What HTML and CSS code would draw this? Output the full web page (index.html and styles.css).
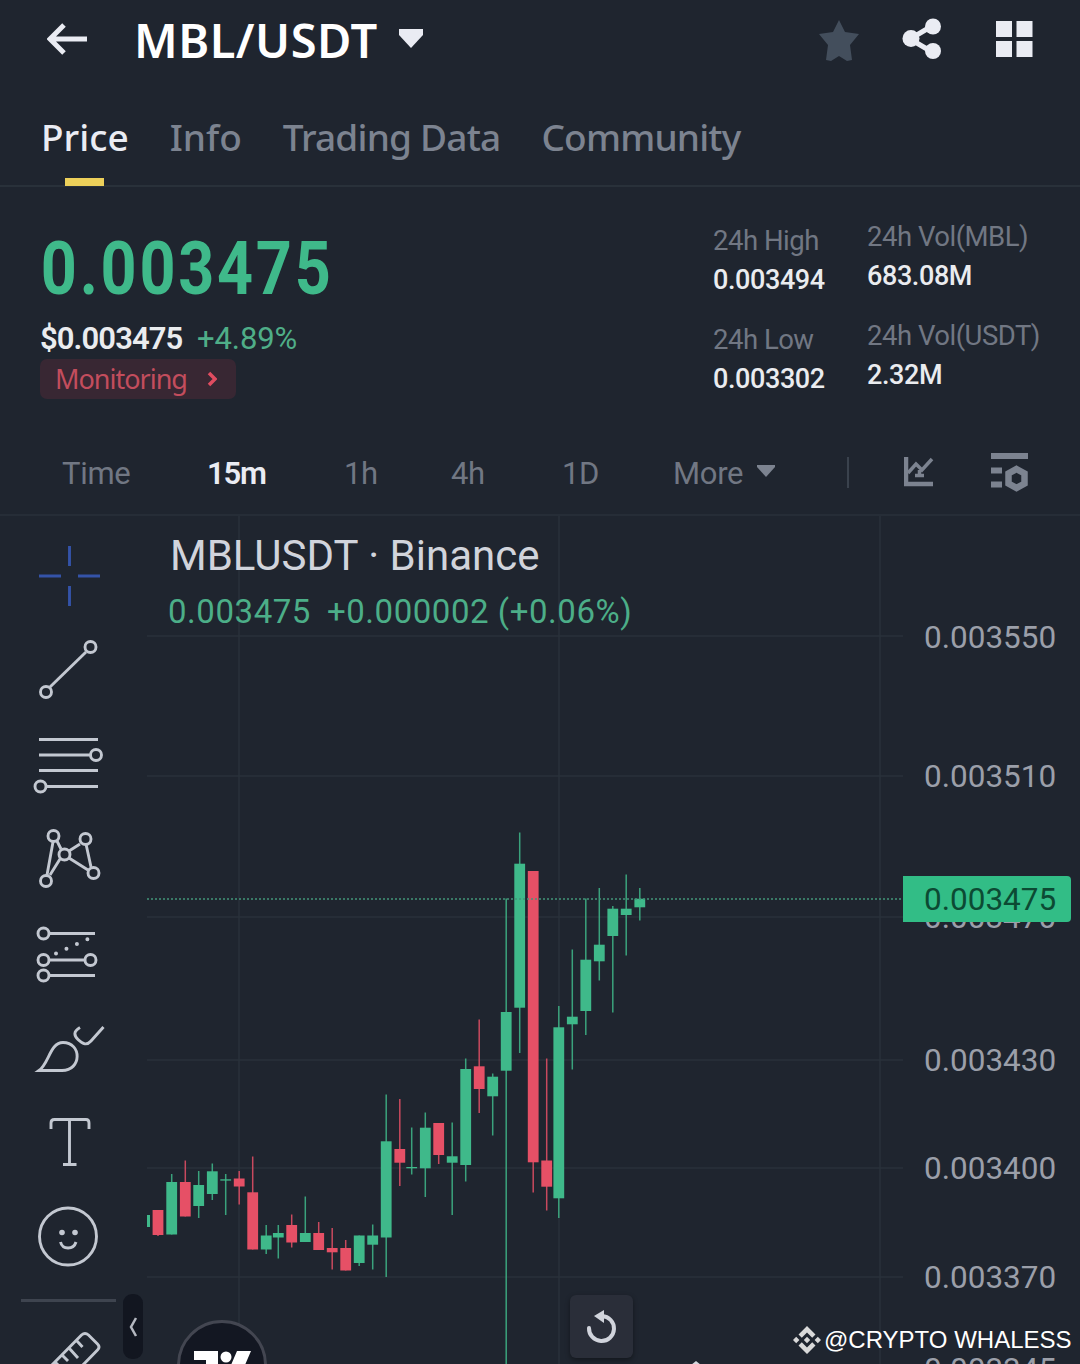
FILE: index.html
```html
<!DOCTYPE html>
<html lang="en">
<head>
    <meta charset="UTF-8">
    <meta name="viewport" content="width=device-width, initial-scale=1.0">
    <title>MBL/USDT</title>
    <link rel="stylesheet" href="styles.css">
</head>
<body>
    <div class="app">
        <header class="header">
            <svg class="back" width="40" height="34" viewBox="0 0 40 34"><path d="M17 3 3 17l14 14M4 17h36" /></svg>
            <h1 class="pair">MBL/USDT</h1>
            <svg class="caret" width="26" height="22" viewBox="0 0 26 22"><path d="M1 1h24v6L13 20 1 7z" /></svg>
            <svg class="star" width="40" height="42" viewBox="0 0 40 42"><path d="m20 1 6 12 14 2-9 11 2 15-5 1-8-5-8 5-5-1 2-15L0 15l14-2z" /></svg>
            <svg class="share" width="40" height="42" viewBox="0 0 40 42">
                <path d="M30 8 8 21l22 13" />
                <circle cx="31" cy="8.500" r="8" /><circle cx="9" cy="20.500" r="8.500" /><circle cx="31" cy="33" r="8" />
            </svg>
            <svg class="apps" width="37" height="36" viewBox="0 0 37 36"><path d="M0 0h16v16H0zM20.500 0h16v16h-16zM0 20h16v16H0zM20.500 20h16v16h-16z" /></svg>
        </header>

        <nav class="tabs">
            <a class="tab active">Price</a>
            <a class="tab">Info</a>
            <a class="tab tight">Trading Data</a>
            <a class="tab tight">Community</a>
        </nav>

        <section class="summary">
            <div class="quote">
                <div class="last">0.003475</div>
                <div class="sub"><span class="usd">$0.003475</span><span class="change">+4.89%</span></div>
                <div class="badge">
                    <span>Monitoring</span>
                    <svg width="10" height="16" viewBox="0 0 10 16"><path d="m2 2 6 6-6 6" /></svg>
                </div>
            </div>
            <dl class="stats low">
                <dt>24h High</dt><dd>0.003494</dd>
                <dt>24h Low</dt><dd>0.003302</dd>
            </dl>
            <dl class="stats">
                <dt>24h Vol(MBL)</dt><dd>683.08M</dd>
                <dt>24h Vol(USDT)</dt><dd>2.32M</dd>
            </dl>
        </section>

        <nav class="frames">
            <a>Time</a>
            <a class="active">15m</a>
            <a>1h</a>
            <a>4h</a>
            <a>1D</a>
            <a>More</a>
            <svg class="more" width="18" height="12" viewBox="0 0 18 12"><path d="M0 0h18v2L9 12 0 2z" /></svg>
            <i class="sep"></i>
            <svg class="ind" width="30" height="30" viewBox="0 0 30 30">
                <path d="M2 0v27h27" stroke-width="4.500" />
                <path d="m4 16 8-9 6 6L28 2M11 18.500h9M15.500 13v5" stroke-width="3.500" />
            </svg>
            <svg class="settings" width="38" height="40" viewBox="0 0 38 40">
                <path d="M0 4h37M0 18.500h11M0 32.500h11" stroke-width="6" />
                <path d="m25.500 17 8 4.500v10l-8 4.500-8-4.500v-10z" stroke-width="6.500" />
            </svg>
        </nav>

        <main class="chart">
            <div class="tools">
                <svg class="cross" viewBox="0 529 147 94"><path d="M69.500 546v20M69.500 586v20M39 576h22M78 576h22" /></svg>
                <svg viewBox="0 623 147 94"><path d="m50 687 36-35" /><circle cx="46" cy="692" r="5.500" /><circle cx="90.500" cy="647" r="5.500" /></svg>
                <svg viewBox="0 717 147 94"><path d="M39 739.500h59M39 755h51M39 770.500h59M47 786.500h51" /><circle cx="96" cy="755" r="5.500" /><circle cx="40.500" cy="786.500" r="5.500" /></svg>
                <svg viewBox="0 811 147 94">
                    <path d="m53 842-6 33M57 841l4 8M69 851l11-7M86 844l5 23M69 858l19 12M60 859l-10 16" />
                    <circle cx="53.500" cy="836" r="5.500" /><circle cx="85.500" cy="839" r="5.500" /><circle cx="64.500" cy="854.500" r="5.500" /><circle cx="46" cy="881" r="5.500" /><circle cx="93.500" cy="873" r="5.500" />
                </svg>
                <svg viewBox="0 905 147 94">
                    <path d="M49 933.500h46M49 960h36M49 975.500h46" />
                    <path class="dots" d="m56 953.500 34-15.500" />
                    <circle cx="43.500" cy="933.500" r="5.500" /><circle cx="43.500" cy="960" r="5.500" /><circle cx="90.500" cy="960" r="5.500" /><circle cx="43.500" cy="975.500" r="5.500" />
                </svg>
                <svg viewBox="0 999 147 94"><path d="M39 1070.500c10-7 11-28 24-28 19 0 19 28-1 28zM80 1027.500c-7 4-6 8-2 12 5 5 9 6 13 1.500l12.500-14" /></svg>
                <svg viewBox="0 1093 147 94"><path d="M51 1129v-6q0-3.500 3.500-3.500H86q3 0 3 3.500v6M69.500 1120v44.500M63 1164.500h13.500" /></svg>
                <svg viewBox="0 1187 147 94">
                    <circle cx="68" cy="1236.500" r="28.500" /><path d="M60.500 1242c2 8 13 8 15.500 0" />
                    <circle class="dot" cx="62" cy="1232.500" r="2.800" /><circle class="dot" cx="75" cy="1232.500" r="2.800" />
                </svg>
                <svg viewBox="0 1281 147 83">
                    <path class="rule" d="M21 1300.500h95" />
                    <path d="m48 1369 33.500-34q3.500-3 7 0l9 9q3 3 0 6L79 1369M77 1341l5.500 6M69 1348l9 10M62 1355l6 6M55 1362l8 8" />
                </svg>
            </div>

            <svg class="plot" viewBox="147 516 933 848">
                <path class="grid" d="M147 636h756M147 776h756M147 917h756M147 1060h756M147 1168h756M147 1277h756M239 516v848M559 516v848M880 516v848" />
                <g id="candles"></g>
                <path class="price-line" d="M147 899h756" />
                <g class="axis">
                    <text x="924" y="647.500">0.003550</text>
                    <text x="924" y="787">0.003510</text>
                    <text x="924" y="928">0.003470</text>
                    <text x="924" y="1070.500">0.003430</text>
                    <text x="924" y="1178.500">0.003400</text>
                    <text x="924" y="1288">0.003370</text>
                    <text x="924" y="1380">0.003345</text>
                </g>
                <path class="price-tag" d="M903 876h164q4 0 4 4v38q0 4-4 4H903z" />
                <text class="price-text" x="924" y="910">0.003475</text>
                <path class="peak" d="m691 1365 5-4 5 4z" />
            </svg>

            <div class="legend">
                <div class="symbol">MBLUSDT · Binance</div>
                <div class="delta"><span>0.003475</span><span>+0.000002 (+0.06%)</span></div>
            </div>

            <div class="collapse"><svg width="9" height="20" viewBox="0 0 9 20"><path d="M7 1 2 10l5 9" /></svg></div>

            <svg class="tv" width="90" height="45" viewBox="0 0 90 45">
                <circle cx="45" cy="45" r="43.500" />
                <path d="M17 31h24v14H29v-5H17zM60 31h14l-6 14H54z" /><circle class="tv-dot" cx="49" cy="37" r="5.500" />
            </svg>

            <div class="reset">
                <svg width="32" height="34" viewBox="0 0 32 34"><path d="M3 18a12.500 12.500 0 1 0 13-12" /><path class="head" d="M8 6 18 0v13z" /></svg>
            </div>

            <div class="watermark">
                <svg width="28" height="28" viewBox="0 0 28 28">
                    <path d="m14 0 8.500 8.500-3.300 3.200L14 6.500l-5.200 5.200-3.300-3.200zM14 28l8.500-8.500-3.300-3.200-5.200 5.200-5.200-5.200-3.300 3.200zM3.200 10.800 6.400 14l-3.200 3.200L0 14zM24.800 10.800 28 14l-3.200 3.200-3.200-3.200zM14 10.800l3.200 3.200-3.200 3.200-3.200-3.200z" />
                </svg>
                <span>@CRYPTO WHALESS</span>
            </div>
        </main>
    </div>
    <script>
        // x, wick top, body top, body bottom, wick bottom, up
        const candles = [
            [158, 1210, 1210, 1235, 1236, 0],
            [171.7, 1174, 1182, 1234.5, 1234.5, 1],
            [185.3, 1160.5, 1182, 1216.5, 1216.5, 0],
            [198.7, 1171, 1185, 1206, 1218, 1],
            [212.3, 1163.5, 1171.3, 1194, 1200, 1],
            [225.7, 1174, 1179.3, 1180.6, 1215, 1],
            [239.2, 1171, 1178.5, 1186.5, 1204.5, 0],
            [252.7, 1156.5, 1192.3, 1249.5, 1249.5, 0],
            [266.2, 1225, 1235.5, 1249.5, 1254, 1],
            [278.3, 1225, 1233, 1237.5, 1258.5, 1],
            [291.7, 1214.5, 1225, 1242.5, 1247.5, 0],
            [305.3, 1196.5, 1233, 1242, 1242, 1],
            [318.7, 1222, 1233, 1250, 1250, 0],
            [332.2, 1228, 1248, 1252.3, 1269.5, 0],
            [345.7, 1240, 1248, 1270.5, 1270.5, 0],
            [359.2, 1235.5, 1235.5, 1263, 1266, 1],
            [372.7, 1224.5, 1235.5, 1244.7, 1269.5, 1],
            [386.2, 1094.5, 1141.3, 1237.5, 1277, 1],
            [399.8, 1099, 1149, 1162.7, 1186, 0],
            [411.7, 1127.5, 1167, 1168.3, 1174.5, 1],
            [425.3, 1112.5, 1127.7, 1168.3, 1197, 1],
            [438.7, 1123, 1123, 1155, 1164, 0],
            [452.2, 1122.5, 1156.3, 1162.7, 1215, 1],
            [465.7, 1058.5, 1069, 1165, 1181.5, 1],
            [479.2, 1019.5, 1066.3, 1089, 1113, 0],
            [492.7, 1073.5, 1076.7, 1096.3, 1135.5, 1],
            [506.2, 898.5, 1012, 1070.7, 1364, 1],
            [519.7, 832.5, 863.7, 1007.7, 1053, 1],
            [533.2, 871, 871, 1162.3, 1192.5, 0],
            [546.7, 1058.5, 1160.5, 1186.7, 1210.5, 0],
            [558.8, 1006, 1027.3, 1198.3, 1218, 1],
            [572.3, 949.5, 1016.7, 1024.3, 1069.5, 1],
            [585.8, 898.5, 959.7, 1011, 1035, 1],
            [599.3, 888, 944.7, 961.3, 980.5, 1],
            [612.8, 906, 908.7, 936, 1012.5, 1],
            [626.2, 874.5, 908.7, 915, 955.5, 1],
            [639.8, 888, 898.7, 907.3, 920.5, 1]
        ];

        const group = document.getElementById('candles');
        let shapes = '<rect class="up" x="147" y="1215" width="3" height="12"/>';
        candles.forEach(([x, high, top, bottom, low, up]) => {
            const side = up ? 'up' : 'down';
            shapes += `<rect class="wick ${side}" x="${x - 0.75}" y="${high}" width="1.500" height="${low - high}"/>`;
            shapes += `<rect class="${side}" x="${x - 5.4}" y="${top}" width="10.800" height="${bottom - top}"/>`;
        });
        group.innerHTML = shapes;
    </script>
</body>
</html>
```
FILE: styles.css
```css
* {
    box-sizing: border-box;
}

body {
    margin: 0;
    background: #1f252f;
    color: #eaecef;
    font-family: Roboto, sans-serif;
}

svg {
    display: block;
    flex: none;
}

.app {
    width: 1080px;
    height: 1364px;
    overflow: hidden;
}

/* header */
.header {
    display: flex;
    align-items: center;
    height: 78px;
    padding-left: 47px;
}

.header svg {
    fill: #eaecf3;
}

.header .back {
    margin-top: -1px;
    fill: none;
    stroke: #eaecf3;
    stroke-width: 5;
}

.pair {
    width: 242px;
    margin: 2px 0 0 46px;
    padding-left: 1px;
    font: 600 47px/60px "Noto Sans", sans-serif;
    letter-spacing: 0.5px;
    color: #fff;
    white-space: nowrap;
}

.caret {
    margin-left: 23px;
}

.header .star {
    margin: 1px 0 0 395px;
    fill: #434e5c;
}

.header .share {
    margin: -1px 0 0 43px;
    stroke: #eaecf3;
    stroke-width: 5;
}

.share circle {
    stroke: none;
}

.share path {
    fill: none;
}

.header .apps {
    margin: -1px 0 0 54px;
}

/* tabs */
.tabs {
    display: flex;
    gap: 41px;
    height: 109px;
    padding: 32px 0 0 41px;
    border-bottom: 2px solid #29313a;
    font: 500 37px/54px "Noto Sans", sans-serif;
    color: #7c8390;
}

.tab {
    position: relative;
    white-space: nowrap;
}

.tab.tight {
    letter-spacing: -0.8px;
}

.tab.active {
    color: #eaecf3;
}

.tab.active::after {
    content: "";
    position: absolute;
    left: 24px;
    top: 68px;
    width: 39px;
    height: 8px;
    background: #ecd05a;
}

/* price summary */
.summary {
    display: flex;
    height: 243px;
    padding: 37px 0 0 40px;
    white-space: nowrap;
}

.quote {
    width: 673px;
}

.last {
    height: 98px;
    padding: 1px 0 0 1px;
    font-size: 74px;
    font-weight: 700;
    line-height: 88px;
    letter-spacing: 3.2px;
    color: #3fb98a;
    transform: scaleX(0.85);
    transform-origin: left;
}

.sub {
    display: flex;
    height: 37px;
    font-size: 31px;
    line-height: 33px;
}

.usd {
    width: 157px;
    font-weight: 600;
    letter-spacing: -0.9px;
}

.change {
    letter-spacing: -0.1px;
    color: #4fae88;
}

.badge {
    display: flex;
    align-items: center;
    gap: 20px;
    width: 196px;
    height: 40px;
    padding-left: 15px;
    border-radius: 7px;
    background: #382733;
    font: 27px/38px "Noto Sans", sans-serif;
    letter-spacing: -1px;
    color: #c34d5d;
}

.badge svg {
    fill: none;
    stroke: #e04c60;
    stroke-width: 3.5;
}

.stats {
    width: 154px;
    margin: -3px 0 0;
}

.stats.low {
    margin-top: 1px;
}

.stats dt {
    height: 39px;
    font-size: 27.5px;
    line-height: 32px;
    letter-spacing: -0.5px;
    color: #717783;
}

.stats dd {
    height: 60px;
    margin: 0;
    font-size: 27px;
    line-height: 32px;
    font-weight: 500;
    letter-spacing: -0.4px;
}

/* timeframes */
.frames {
    display: grid;
    grid-template-columns: 145px 137px 107px 111px 111px 84px 90px 57px 87px 40px;
    align-items: center;
    height: 86px;
    padding-left: 62px;
    border-bottom: 2px solid #262d37;
    font-size: 31px;
    color: #717783;
}

.frames a {
    padding-top: 2px;
    letter-spacing: -0.3px;
}

.frames .active {
    color: #eaecf3;
    font-weight: 600;
    letter-spacing: -1.2px;
}

.frames svg {
    fill: none;
    stroke: #7c8390;
}

.frames .more {
    margin-top: -2px;
    fill: #7c8390;
    stroke: none;
}

.sep {
    width: 2px;
    height: 31px;
    background: #3a424d;
}

/* chart */
.chart {
    position: relative;
    display: flex;
    height: 848px;
}

.tools {
    width: 147px;
    padding-top: 13px;
}

.tools svg {
    width: 147px;
    fill: none;
    stroke: #c3c8d1;
    stroke-width: 2.9;
}

.tools .cross {
    stroke: #3453a8;
}

.tools .dots {
    stroke-width: 4;
    stroke-linecap: round;
    stroke-dasharray: 0 11.5;
}

.tools .dot {
    fill: #c3c8d1;
    stroke: none;
}

.tools .rule {
    stroke: #3e444f;
}

.plot {
    width: 933px;
    height: 848px;
}

.grid {
    fill: none;
    stroke: #2a313b;
    stroke-width: 1.5;
}

.up {
    fill: #3fb98a;
}

.down {
    fill: #e65066;
}

.wick {
    opacity: 0.85;
}

.price-line {
    stroke: #43957a;
    stroke-width: 1.6;
    stroke-dasharray: 2 2;
}

.axis {
    fill: #9b9fa9;
    font-size: 31.5px;
}

.price-tag {
    fill: #32bd86;
}

.price-text {
    fill: #0c4a33;
    font-size: 31.5px;
}

.peak {
    fill: #d5d8de;
}

.legend {
    position: absolute;
    left: 168px;
    top: 15px;
    white-space: nowrap;
}

.symbol {
    height: 61px;
    padding-left: 2px;
    font-size: 42px;
    line-height: 50px;
    color: #d1d4dc;
}

.delta {
    display: flex;
    gap: 16px;
    font-size: 33px;
    line-height: 40px;
    letter-spacing: 0.55px;
    color: #4cae88;
}

.collapse {
    position: absolute;
    left: 123px;
    top: 778px;
    display: grid;
    place-items: center;
    width: 20px;
    height: 65px;
    border-radius: 9px;
    background: #121620;
}

.collapse svg {
    fill: none;
    stroke: #b4b8c0;
    stroke-width: 2.5;
}

.tv {
    position: absolute;
    left: 177px;
    top: 804px;
    fill: #fff;
}

.tv circle {
    fill: #131722;
    stroke: #434651;
    stroke-width: 3;
}

.tv .tv-dot {
    fill: #fff;
    stroke: none;
}

.reset {
    position: absolute;
    left: 570px;
    top: 779px;
    display: grid;
    place-items: center;
    width: 63px;
    height: 63px;
    border-radius: 6px;
    background: #2a2e39;
    box-shadow: 0 2px 5px rgba(0, 0, 0, 0.4);
}

.reset svg {
    fill: none;
    stroke: #d1d4dc;
    stroke-width: 4;
    stroke-linecap: round;
}

.reset .head {
    fill: #d1d4dc;
    stroke: none;
}

.watermark {
    position: absolute;
    left: 793px;
    top: 810px;
    display: flex;
    align-items: center;
    gap: 3px;
    font: 24px/28px "Liberation Sans", sans-serif;
    color: #fff;
    white-space: nowrap;
}

.watermark svg {
    fill: #d9d9d9;
}
```
